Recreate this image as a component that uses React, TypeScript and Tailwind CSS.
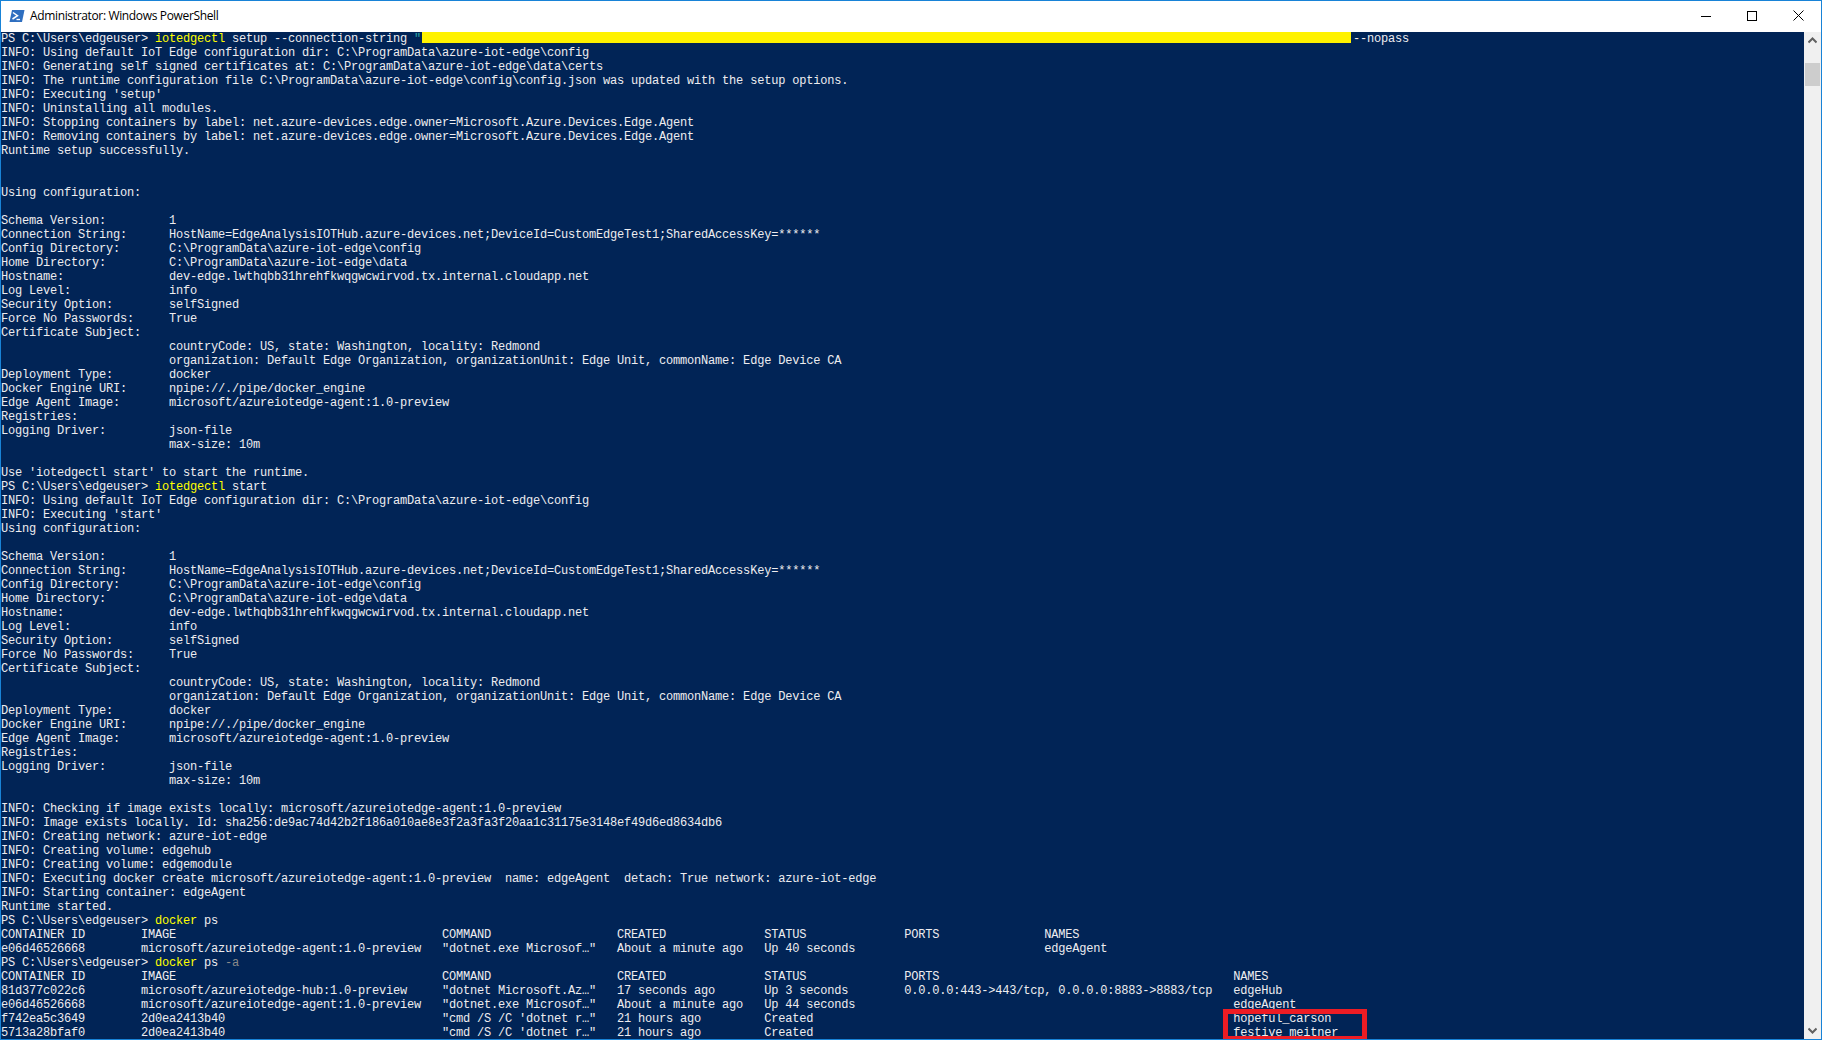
const LINES: string[] = [
  "INFO: Using default IoT Edge configuration dir: C:\\ProgramData\\azure-iot-edge\\config",
  "INFO: Generating self signed certificates at: C:\\ProgramData\\azure-iot-edge\\data\\certs",
  "INFO: The runtime configuration file C:\\ProgramData\\azure-iot-edge\\config\\config.json was updated with the setup options.",
  "INFO: Executing 'setup'",
  "INFO: Uninstalling all modules.",
  "INFO: Stopping containers by label: net.azure-devices.edge.owner=Microsoft.Azure.Devices.Edge.Agent",
  "INFO: Removing containers by label: net.azure-devices.edge.owner=Microsoft.Azure.Devices.Edge.Agent",
  "Runtime setup successfully.",
  "",
  "",
  "Using configuration:",
  "",
];

const CONFIG: [string, string][] = [
  ["Schema Version:", "1"],
  ["Connection String:", "HostName=EdgeAnalysisIOTHub.azure-devices.net;DeviceId=CustomEdgeTest1;SharedAccessKey=******"],
  ["Config Directory:", "C:\\ProgramData\\azure-iot-edge\\config"],
  ["Home Directory:", "C:\\ProgramData\\azure-iot-edge\\data"],
  ["Hostname:", "dev-edge.lwthqbb31hrehfkwqgwcwirvod.tx.internal.cloudapp.net"],
  ["Log Level:", "info"],
  ["Security Option:", "selfSigned"],
  ["Force No Passwords:", "True"],
  ["Certificate Subject:", ""],
  ["", "countryCode: US, state: Washington, locality: Redmond"],
  ["", "organization: Default Edge Organization, organizationUnit: Edge Unit, commonName: Edge Device CA"],
  ["Deployment Type:", "docker"],
  ["Docker Engine URI:", "npipe://./pipe/docker_engine"],
  ["Edge Agent Image:", "microsoft/azureiotedge-agent:1.0-preview"],
  ["Registries:", ""],
  ["Logging Driver:", "json-file"],
  ["", "max-size: 10m"],
];

const PROMPT = "PS C:\\Users\\edgeuser> ";

const WIDTHS = [20, 43, 25, 21, 20];
function table(cells: string[], portsWidth: number) {
  const widths = [...WIDTHS, portsWidth];
  return cells.map((c, i) => (i < widths.length ? c.padEnd(widths[i]) : c)).join("");
}

const HEADER = ["CONTAINER ID", "IMAGE", "COMMAND", "CREATED", "STATUS", "PORTS", "NAMES"];

function Row({ children }: { children?: React.ReactNode }) {
  return <div className="h-[14px] whitespace-pre leading-[14px]">{children || " "}</div>;
}

function Prompt({ cmd, rest, muted }: { cmd: string; rest?: string; muted?: string }) {
  return (
    <Row>
      {PROMPT}
      <span className="text-[#ffff00]">{cmd}</span>
      {rest}
      {muted ? <span className="text-[#8a8a8a]">{muted}</span> : null}
    </Row>
  );
}

function PowerShellIcon() {
  return (
    <svg width="16" height="16" viewBox="0 0 16 16">
      <path d="M3 2h12.5l-2.5 12H0.5z" fill="#2f6fc0" />
      <path d="M4 4.5l4.5 3.2-5 3.3" fill="none" stroke="#ffffff" strokeWidth="1.5" />
      <path d="M7.5 11.5h3.5" stroke="#ffffff" strokeWidth="1.3" />
    </svg>
  );
}

function WindowControls() {
  return (
    <div className="flex h-full items-center">
      <div className="flex h-full w-[46px] items-center justify-center">
        <svg width="10" height="10" viewBox="0 0 10 10"><path d="M0 5.5h10" stroke="#000" strokeWidth="1" /></svg>
      </div>
      <div className="flex h-full w-[46px] items-center justify-center">
        <svg width="10" height="10" viewBox="0 0 10 10"><rect x="0.5" y="0.5" width="9" height="9" fill="none" stroke="#000" strokeWidth="1" /></svg>
      </div>
      <div className="flex h-full w-[46px] items-center justify-center">
        <svg width="11" height="11" viewBox="0 0 11 11"><path d="M0.5 0.5l10 10M10.5 0.5l-10 10" stroke="#000" strokeWidth="1" /></svg>
      </div>
    </div>
  );
}

function ScrollBar() {
  return (
    <div className="flex w-[17px] shrink-0 flex-col bg-[#f0f0f0]">
      <div className="flex h-[17px] items-center justify-center">
        <svg width="9" height="7" viewBox="0 0 9 7"><path d="M0.5 5.5L4.5 1.5l4 4" fill="none" stroke="#606060" strokeWidth="2" /></svg>
      </div>
      <div className="mx-[1px] mt-[14px] h-[23px] bg-[#cdcdcd]" />
      <div className="flex-1" />
      <div className="flex h-[17px] items-center justify-center">
        <svg width="9" height="7" viewBox="0 0 9 7"><path d="M0.5 1.5L4.5 5.5l4-4" fill="none" stroke="#606060" strokeWidth="2" /></svg>
      </div>
    </div>
  );
}

function ConfigBlock() {
  return (
    <>
      {CONFIG.map(([k, v], i) => (
        <Row key={i}>{k.padEnd(24) + v}</Row>
      ))}
    </>
  );
}

export default function App() {
  return (
    <div className="flex h-[1040px] w-[1822px] flex-col overflow-hidden border border-[#1883d7] bg-white">
      <div className="flex h-[31px] shrink-0 items-center justify-between pb-[2px]">
        <div className="flex items-center gap-[5px] pl-[8px] text-[12px] tracking-[-0.35px] text-black [font-family:'Open_Sans',sans-serif]">
          <PowerShellIcon />
          <span>Administrator: Windows PowerShell</span>
        </div>
        <WindowControls />
      </div>
      <div className="flex min-h-0 flex-1">
        <div className="relative min-w-0 flex-1 overflow-hidden bg-[#012456] text-[12px] tracking-[-0.2px] text-[#eeedf0] [font-family:'Liberation_Mono',monospace]">
          <Row>
            {PROMPT}
            <span className="text-[#ffff00]">iotedgectl</span>
            {" setup --connection-string "}
            <span className="text-[#2aa6a6]">"</span>
            <span className="mr-[2px] ml-[1px] inline-block h-[11px] w-[929px] bg-[#fff200] align-top" />
            {"--nopass"}
          </Row>
          {LINES.map((l, i) => <Row key={i}>{l}</Row>)}
          <ConfigBlock />
          <Row />
          <Row>Use 'iotedgectl start' to start the runtime.</Row>
          <Prompt cmd="iotedgectl" rest=" start" />
          <Row>{"INFO: Using default IoT Edge configuration dir: C:\\ProgramData\\azure-iot-edge\\config"}</Row>
          <Row>INFO: Executing 'start'</Row>
          <Row>Using configuration:</Row>
          <Row />
          <ConfigBlock />
          <Row />
          <Row>INFO: Checking if image exists locally: microsoft/azureiotedge-agent:1.0-preview</Row>
          <Row>INFO: Image exists locally. Id: sha256:de9ac74d42b2f186a010ae8e3f2a3fa3f20aa1c31175e3148ef49d6ed8634db6</Row>
          <Row>INFO: Creating network: azure-iot-edge</Row>
          <Row>INFO: Creating volume: edgehub</Row>
          <Row>INFO: Creating volume: edgemodule</Row>
          <Row>INFO: Executing docker create microsoft/azureiotedge-agent:1.0-preview  name: edgeAgent  detach: True network: azure-iot-edge</Row>
          <Row>INFO: Starting container: edgeAgent</Row>
          <Row>Runtime started.</Row>
          <Prompt cmd="docker" rest=" ps" />
          <Row>{table(HEADER, 20)}</Row>
          <Row>{table(["e06d46526668", "microsoft/azureiotedge-agent:1.0-preview", "\"dotnet.exe Microsof…\"", "About a minute ago", "Up 40 seconds", "", "edgeAgent"], 20)}</Row>
          <Prompt cmd="docker" rest=" ps" muted=" -a" />
          <Row>{table(HEADER, 47)}</Row>
          <Row>{table(["81d377c022c6", "microsoft/azureiotedge-hub:1.0-preview", "\"dotnet Microsoft.Az…\"", "17 seconds ago", "Up 3 seconds", "0.0.0.0:443->443/tcp, 0.0.0.0:8883->8883/tcp", "edgeHub"], 47)}</Row>
          <Row>{table(["e06d46526668", "microsoft/azureiotedge-agent:1.0-preview", "\"dotnet.exe Microsof…\"", "About a minute ago", "Up 44 seconds", "", "edgeAgent"], 47)}</Row>
          <Row>{table(["f742ea5c3649", "2d0ea2413b40", "\"cmd /S /C 'dotnet r…\"", "21 hours ago", "Created", "", "hopeful_carson"], 47)}</Row>
          <Row>{table(["5713a28bfaf0", "2d0ea2413b40", "\"cmd /S /C 'dotnet r…\"", "21 hours ago", "Created", "", "festive_meitner"], 47)}</Row>
          <div className="absolute left-[1222px] top-[977px] h-[32px] w-[144px] border-[5px] border-[#ed1c24]" />
        </div>
        <ScrollBar />
      </div>
    </div>
  );
}
